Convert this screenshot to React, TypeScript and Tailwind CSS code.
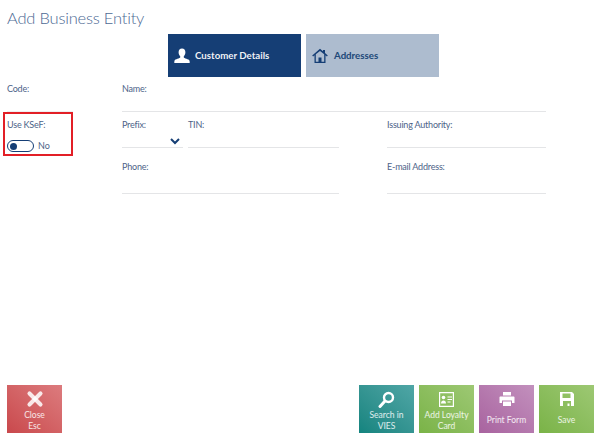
import { X } from "lucide-react"
import type { ReactNode } from "react"

function Field({ label, className = "", children }: { label: string; className?: string; children?: ReactNode }) {
  return (
    <div className={`border-b border-[#e4e5e7] ${className}`}>
      <div className="text-[9px] leading-[13px] tracking-[-0.2px] text-[#4d6388]">{label}</div>
      {children}
    </div>
  )
}

function ActionButton({ icon, label, className }: { icon: ReactNode; label: ReactNode; className: string }) {
  return (
    <button className={`flex h-[48px] w-[55px] flex-col items-center text-center text-[8.5px] leading-[11px] text-white/85 ${className}`}>
      <span className="mt-[5px] flex h-[18px] items-center">{icon}</span>
      <span className="flex flex-1 items-center">{label}</span>
    </button>
  )
}

export default function App() {
  return (
    <div className="flex h-[436px] w-[600px] flex-col bg-white font-['Lato','Open_Sans',sans-serif]">
      <h1 className="pl-[7px] pt-[6px] text-[16.5px] leading-[24px] tracking-[-0.2px] font-light text-[#4d6a94]">Add Business Entity</h1>

      <div className="mt-[4px] flex gap-[5px] pl-[168px]">
        <div className="flex h-[43px] w-[133px] items-center gap-[5px] bg-[#153e75] pl-[6px] text-[9.7px] font-bold text-white/95">
          <svg width="16" height="16" viewBox="0 0 16 16" fill="white">
            <path d="M8 0.5c2.2 0 3.4 1.6 3.4 3.8 0 1.700-.7 3.200-1.600 4v1.200c0 .8 5.200 1.500 5.700 3.200.2.7.2 1.500.2 2.300H.3c0-.8 0-1.600.2-2.300.5-1.700 5.700-2.400 5.700-3.200V8.300c-.9-.8-1.600-2.300-1.600-4C4.600 2.100 5.800.5 8 .5z" />
          </svg>
          Customer Details
        </div>
        <div className="flex h-[43px] w-[133px] items-center gap-[6px] bg-[#adbccf] pl-[6px] text-[9.7px] font-bold text-[#204878]">
          <svg width="16" height="16" viewBox="0 0 16 16" fill="#153e75">
            <path fillRule="evenodd" d="M8 .8l3 2.500V2h2v3l2.800 2.400-.9 1L13.500 7.200V15H2.500V7.200L1.100 8.400l-.9-1L8 .8zM8 2.900L3.800 6.300v7.400h2.700V9.500h3v4.200h2.700V6.300L8 2.900z" />
          </svg>
          Addresses
        </div>
      </div>

      <div className="flex pt-[5px]">
        <div className="w-[122px] shrink-0 pl-[3px]">
          <div className="ml-[4px] h-[30px] w-[66px] border-b border-[#eeeff0]">
            <div className="text-[9px] leading-[13px] tracking-[-0.2px] text-[#4d6388]">Code:</div>
          </div>
          <div className="h-[44px] w-[70px] border-2 border-[#e21f26] pl-[2px] pt-[4px]">
            <div className="text-[9px] leading-[13px] tracking-[-0.2px] text-[#4d6388]">Use KSeF:</div>
            <div className="mt-[9px] flex items-center gap-[4px]">
              <div className="flex h-[12px] w-[27px] items-center rounded-full border-[1.5px] border-[#153e75] pl-[2px]">
                <div className="h-[7px] w-[7px] rounded-full bg-[#153e75]" />
              </div>
              <span className="text-[9px] leading-[12px] text-[#4d6388]">No</span>
            </div>
          </div>
        </div>

        <div className="flex w-[424px] flex-col">
          <Field label="Name:" className="h-[30px]" />
          <div className="mt-[6px] flex h-[30px]">
            <Field label="Prefix:" className="relative h-[30px] w-[61px]">
              <svg className="absolute right-[3px] top-[20px]" width="10" height="7" viewBox="0 0 10 7" fill="none" stroke="#153e75" strokeWidth="2">
                <path d="M1 1l4 4 4-4" />
              </svg>
            </Field>
            <Field label="TIN:" className="ml-[5px] h-[30px] w-[151px]" />
            <Field label="Issuing Authority:" className="ml-[48px] h-[30px] w-[159px]" />
          </div>
          <div className="mt-[12px] flex">
            <Field label="Phone:" className="h-[34px] w-[217px]" />
            <Field label="E-mail Address:" className="ml-[48px] h-[34px] w-[159px]" />
          </div>
        </div>
      </div>

      <div className="mt-auto mb-[3px] flex items-end pl-[7px] pr-[6px]">
        <ActionButton
          className="bg-gradient-to-tr from-[#c9484c] to-[#dc7b7e]"
          icon={<X size={22} strokeWidth={4.5} />}
          label={<>Close<br />Esc</>}
        />
        <div className="ml-auto flex gap-[5px]">
          <ActionButton
            className="bg-gradient-to-tr from-[#12847f] to-[#4fa6a6]"
            icon={
              <svg width="17" height="17" viewBox="0 0 17 17" fill="none" stroke="white">
                <circle cx="10.500" cy="6.500" r="4.500" strokeWidth="2.400" />
                <path d="M7 10l-5 5.500" strokeWidth="3" strokeLinecap="round" />
              </svg>
            }
            label={<>Search in<br />VIES</>}
          />
          <ActionButton
            className="bg-gradient-to-tr from-[#7ab347] to-[#9dc873]"
            icon={
              <svg width="17" height="17" viewBox="0 0 17 17" fill="white">
                <path fillRule="evenodd" d="M1 1h15v15H1V1zm1.200 1.200v12.600h12.600V2.200H2.200z" />
                <circle cx="5.500" cy="6.500" r="1.800" />
                <path d="M3 12.500c0-2 1-3 2.500-3s2.500 1 2.500 3H3zM9.500 5.500h4.500v1H9.500zM9.500 8h4.500v1H9.500zM9.500 10.500h3v1h-3z" />
              </svg>
            }
            label={<>Add Loyalty<br />Card</>}
          />
          <ActionButton
            className="bg-gradient-to-tr from-[#a8639f] to-[#c290bd]"
            icon={
              <svg width="16" height="16" viewBox="0 0 16 16" fill="white">
                <path fillRule="evenodd" d="M4 1h8v3.500H4V1zM1.500 5.500h13c.6 0 1 .4 1 1V12H13v-2.500H3V12H.5V6.500c0-.6.4-1 1-1zM4 10.500h8V15H4v-4.500z" />
              </svg>
            }
            label="Print Form"
          />
          <ActionButton
            className="bg-gradient-to-tr from-[#7ab347] to-[#9dc873]"
            icon={
              <svg width="16" height="16" viewBox="0 0 16 16" fill="white">
                <path fillRule="evenodd" d="M1 1h12l2 2v12H1V1zm2.500 1.500V7h8V2.500h-8zM4 10v5h8v-5H4zm4.500 2.500h2V15h-2v-2.500z" />
              </svg>
            }
            label="Save"
          />
        </div>
      </div>
    </div>
  )
}
